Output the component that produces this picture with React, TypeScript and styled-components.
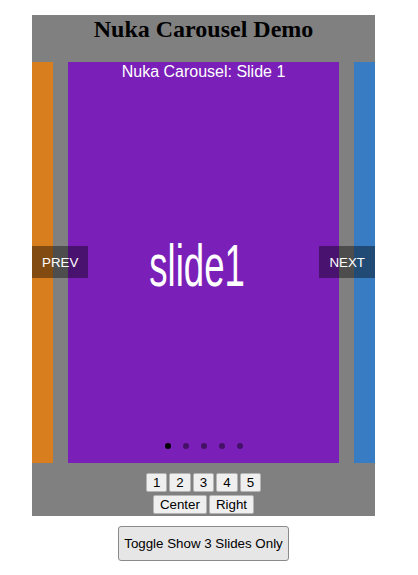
import styled, { createGlobalStyle } from "styled-components";

const GlobalStyle = createGlobalStyle`
  body {
    margin: 0;
    background: #ffffff;
    font-family: "Liberation Sans", Arial, Helvetica, sans-serif;
  }
`;

const Page = styled.div`
  width: 343px;
  margin: 15px 0 0 32px;
  display: flex;
  flex-direction: column;
  align-items: center;
`;

const Demo = styled.div`
  width: 100%;
  background: #808080;
  display: flex;
  flex-direction: column;
`;

const Title = styled.h2`
  margin: 0;
  height: 47px;
  box-sizing: border-box;
  padding-top: 2px;
  font-family: "Liberation Serif", "Times New Roman", serif;
  font-size: 24px;
  line-height: 24px;
  font-weight: bold;
  text-align: center;
  color: #000;
`;

const Frame = styled.div`
  position: relative;
  height: 401px;
  overflow: hidden;
`;

const Track = styled.div`
  display: flex;
  gap: 15px;
  height: 100%;
  transform: translateX(-250px);
`;

const Slide = styled.div<{ $color: string }>`
  flex: 0 0 271px;
  height: 100%;
  background: ${(p) => p.$color};
  display: flex;
  align-items: center;
  justify-content: center;
  padding: 8px 12px 0 0;
  box-sizing: border-box;
`;

const SlideLabel = styled.span`
  color: #fff;
  font-size: 59px;
  line-height: 1;
  display: inline-block;
  transform: scaleX(0.62);
`;

const SlideCaption = styled.div`
  position: absolute;
  top: 0;
  left: 0;
  right: 0;
  text-align: center;
  color: #fff;
  font-size: 16px;
  line-height: 18px;
  padding-top: 1px;
`;

const NavButton = styled.button<{ $side: "left" | "right" }>`
  position: absolute;
  top: 184px;
  ${(p) => (p.$side === "left" ? "left: 0;" : "right: 0;")}
  height: 32px;
  padding: 0 10px;
  border: 0;
  background: rgba(0, 0, 0, 0.4);
  color: #fff;
  font-family: "Liberation Sans", Arial, sans-serif;
  font-size: 13.33px;
  text-transform: uppercase;
`;

const Dots = styled.div`
  position: absolute;
  left: 0;
  right: 0;
  top: 381px;
  display: flex;
  justify-content: center;
  gap: 12px;
`;

const Dot = styled.span<{ $active: boolean }>`
  width: 6px;
  height: 6px;
  border-radius: 50%;
  background: ${(p) => (p.$active ? "#000" : "rgba(0, 0, 0, 0.45)")};
`;

const Controls = styled.div`
  display: flex;
  flex-direction: column;
  align-items: center;
  gap: 3px;
  padding: 10px 0 2px;
`;

const ButtonRow = styled.div`
  display: flex;
  gap: 2px;
`;

const SmallButton = styled.button`
  padding: 1px 6px;
  border: 1px solid #b5b5b5;
  border-radius: 2px;
  background: #efefef;
  color: #000;
  font-family: "Liberation Sans", Arial, sans-serif;
  font-size: 13.33px;
  line-height: 15px;
`;

const ToggleButton = styled.button`
  margin-top: 10px;
  padding: 9px 5px;
  border: 1px solid #8a8a8a;
  border-radius: 3px;
  background: #e6e6e6;
  color: #000;
  font-family: "Liberation Sans", Arial, sans-serif;
  font-size: 13.33px;
  line-height: 15px;
`;

const slides = ["#d87e1f", "#7a1fb8", "#387cc3"];

export default function App() {
  return (
    <>
      <GlobalStyle />
      <Page>
        <Demo>
          <Title>Nuka Carousel Demo</Title>
          <Frame>
            <Track>
              {slides.map((c, i) => (
                <Slide key={i} $color={c}>
                  {i === 1 && <SlideLabel>slide1</SlideLabel>}
                </Slide>
              ))}
            </Track>
            <SlideCaption>Nuka Carousel: Slide 1</SlideCaption>
            <NavButton $side="left">Prev</NavButton>
            <NavButton $side="right">Next</NavButton>
            <Dots>
              {[0, 1, 2, 3, 4].map((i) => (
                <Dot key={i} $active={i === 0} />
              ))}
            </Dots>
          </Frame>
          <Controls>
            <ButtonRow>
              {[1, 2, 3, 4, 5].map((n) => (
                <SmallButton key={n}>{n}</SmallButton>
              ))}
            </ButtonRow>
            <ButtonRow>
              <SmallButton>Center</SmallButton>
              <SmallButton>Right</SmallButton>
            </ButtonRow>
          </Controls>
        </Demo>
        <ToggleButton>Toggle Show 3 Slides Only</ToggleButton>
      </Page>
    </>
  );
}
